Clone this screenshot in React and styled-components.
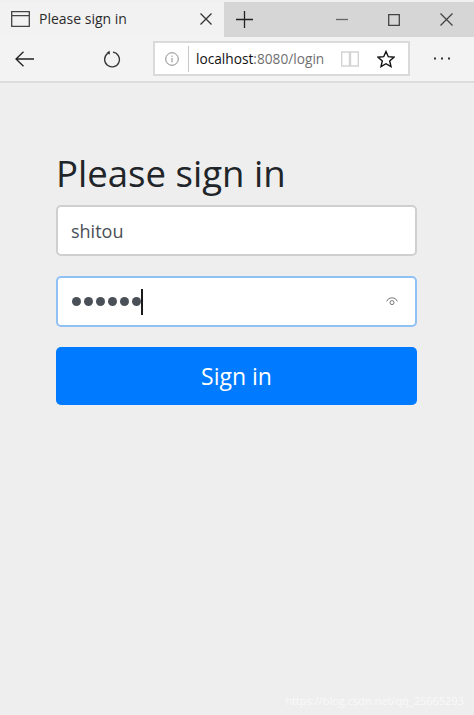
import React from "react";
import styled, { createGlobalStyle } from "styled-components";

const Global = createGlobalStyle`
  html, body { margin: 0; padding: 0; }
  body { font-family: "Open Sans", "Noto Sans", sans-serif; background: #eeeeee; }
  * { box-sizing: border-box; }
`;

const Frame = styled.div`
  width: 474px;
  height: 715px;
  display: flex;
  flex-direction: column;
  overflow: hidden;
`;

const TitleBar = styled.div`
  height: 37px;
  display: flex;
  background: #d6d6d6;
  border-top: 2px solid #f0f0f0;
  flex-shrink: 0;
`;

const Tab = styled.div`
  width: 224px;
  display: flex;
  align-items: center;
  padding: 0 11px 2px;
  background: #f2f2f2;
  color: #2b2b2b;
  font-size: 14px;
`;

const TabTitle = styled.span`
  margin-left: 9px;
  flex: 1;
`;

const NewTab = styled.div`
  width: 41px;
  display: flex;
  align-items: center;
  justify-content: center;
`;

const WindowControls = styled.div`
  margin-left: auto;
  padding-right: 2px;
  display: flex;
  align-items: center;
`;

const ControlBtn = styled.div`
  width: 52px;
  height: 33px;
  display: flex;
  align-items: center;
  justify-content: center;
`;

const Toolbar = styled.div`
  height: 46px;
  flex-shrink: 0;
  display: flex;
  align-items: center;
  background: #f3f3f3;
  border-bottom: 2px solid #dcdcdc;
  padding: 0 0 1px 0;
`;

const NavBtn = styled.div`
  width: ${(p) => p.$w}px;
  margin-right: ${(p) => p.$after || 0}px;
  margin-left: ${(p) => p.$before || 0}px;
  display: flex;
  justify-content: center;
  align-items: center;
`;

const AddressBar = styled.div`
  width: 257px;
  height: 35px;
  background: #fff;
  border: 2px solid #dadada;
  display: flex;
  align-items: center;
  padding: 0 4px 0 10px;
  font-size: 13.7px;
  color: #111;
`;

const Divider = styled.div`
  width: 1px;
  height: 26px;
  background: #c8c8c8;
  margin: 0 7px 0 9px;
`;

const Url = styled.span`
  flex: 1;
  white-space: nowrap;
`;

const UrlMuted = styled.span`
  color: #6f6f6f;
`;

const BarIcon = styled.div`
  width: 36px;
  flex-shrink: 0;
  display: flex;
  justify-content: center;
  align-items: center;
`;

const Page = styled.div`
  flex: 1;
  display: flex;
  flex-direction: column;
  padding: 65px 57px 0 56px;
  background: #eeeeee;
`;

const Heading = styled.h1`
  margin: 0 0 7px;
  font-size: 36.6px;
  font-weight: 400;
  line-height: 50px;
  color: #212529;
`;

const Field = styled.div`
  height: 51px;
  margin-bottom: 20px;
  background: #fff;
  border-radius: 5px;
  border: 2px solid ${(p) => (p.$focus ? "#8fc1f5" : "#cfcfcf")};
  display: flex;
  align-items: center;
  padding: 0 17px 0 13px;
  font-size: 18px;
  color: #495057;
`;

const Dots = styled.div`
  display: flex;
  align-items: center;
  gap: 3px;
  flex: 1;
  padding-left: 1px;
`;

const Dot = styled.span`
  width: 9px;
  height: 9px;
  border-radius: 50%;
  background: #495057;
`;

const Caret = styled.span`
  width: 2px;
  height: 26px;
  background: #1a1a1a;
  margin-left: -3px;
`;

const SignIn = styled.button`
  height: 58px;
  border: none;
  border-radius: 5px;
  background: #007bff;
  color: #fff;
  font-family: inherit;
  font-size: 23px;
  padding: 0;
`;

const Watermark = styled.div`
  margin: auto -47px 7px 0;
  text-align: right;
  font-size: 11px;
  color: #f9f9f9;
  white-space: nowrap;
`;

const Line = ({ d, w = 20, h = 20, box = "0 0 20 20", sw = 1.3, c = "#333" }) => (
  <svg width={w} height={h} viewBox={box} fill="none" stroke={c} strokeWidth={sw}>
    <path d={d} />
  </svg>
);

const ReloadIcon = () => (
  <svg width="18" height="19" viewBox="0 0 18 19" fill="none">
    <path d="M10 3.2A7.4 7.4 0 1 1 4.6 4.6" stroke="#333" strokeWidth="1.3" />
    <path d="M6.6 1.4l.4 4-3.8-1.1z" fill="#333" />
  </svg>
);

export default function App() {
  return (
    <Frame>
      <Global />
      <TitleBar>
        <Tab>
          <Line w={19} h={16} box="0 0 19 16" c="#444" d="M.7.7h17.6v14.6H.7zM.7 4.7h17.6" />
          <TabTitle>Please sign in</TabTitle>
          <Line w={14} h={14} box="0 0 14 14" d="M1.5 1.5l11 11M12.5 1.5l-11 11" />
        </Tab>
        <NewTab>
          <Line w={17} h={17} box="0 0 17 17" c="#222" d="M8.5 0v17M0 8.5h17" />
        </NewTab>
        <WindowControls>
          <ControlBtn>
            <Line w={12} h={3} box="0 0 12 3" c="#666" d="M0 1.5h12" />
          </ControlBtn>
          <ControlBtn>
            <Line w={12} h={12} box="0 0 12 12" c="#444" d="M.7.7h10.6v10.6H.7z" />
          </ControlBtn>
          <ControlBtn>
            <Line w={13} h={13} box="0 0 13 13" c="#444" d="M.5.5l12 12M12.5.5l-12 12" />
          </ControlBtn>
        </WindowControls>
      </TitleBar>
      <Toolbar>
        <NavBtn $w={48}>
          <Line w={19} h={16} box="0 0 19 16" c="#222" d="M19 8H1M8.5.7L1 8l7.5 7.3" />
        </NavBtn>
        <NavBtn $w={48} $before={40} $after={17}>
          <ReloadIcon />
        </NavBtn>
        <AddressBar>
          <Line w={14} h={14} box="0 0 14 14" c="#8a8a8a" sw={1} d="M7 .7a6.3 6.3 0 1 0 0 12.6A6.3 6.3 0 0 0 7 .7zM7 6v4.4M7 3.6v1.3" />
          <Divider />
          <Url>
            localhost<UrlMuted>:8080/login</UrlMuted>
          </Url>
          <BarIcon>
            <Line w={18} h={16} box="0 0 18 16" c="#d4d4d4" sw={1.4} d="M.7 1h7.8v14H.7zM9.5 1h7.8v14H9.5z" />
          </BarIcon>
          <BarIcon>
            <Line w={18} h={18} box="0 0 18 18" c="#111" sw={1.4} d="M9 1.5l2.3 5.2 5.7.5-4.3 3.8 1.3 5.6L9 13.7l-5 2.9 1.3-5.6L1 7.2l5.7-.5z" />
          </BarIcon>
        </AddressBar>
        <NavBtn $w={64}>
          <Line w={16} h={3} box="0 0 16 3" c="#333" sw={2} d="M0 1.5h2M7 1.5h2M14 1.5h2" />
        </NavBtn>
      </Toolbar>
      <Page>
        <Heading>Please sign in</Heading>
        <Field>shitou</Field>
        <Field $focus>
          <Dots>
            <Dot />
            <Dot />
            <Dot />
            <Dot />
            <Dot />
            <Dot />
            <Caret />
          </Dots>
          <Line w={12} h={9} box="0 0 12 9" c="#777" sw={1} d="M.6 4.4a5.8 5.8 0 0 1 10.8 0M6 3.6a2 2 0 1 0 0 4 2 2 0 0 0 0-4z" />
        </Field>
        <SignIn>Sign in</SignIn>
        <Watermark>https://blog.csdn.net/qq_25665293</Watermark>
      </Page>
    </Frame>
  );
}
